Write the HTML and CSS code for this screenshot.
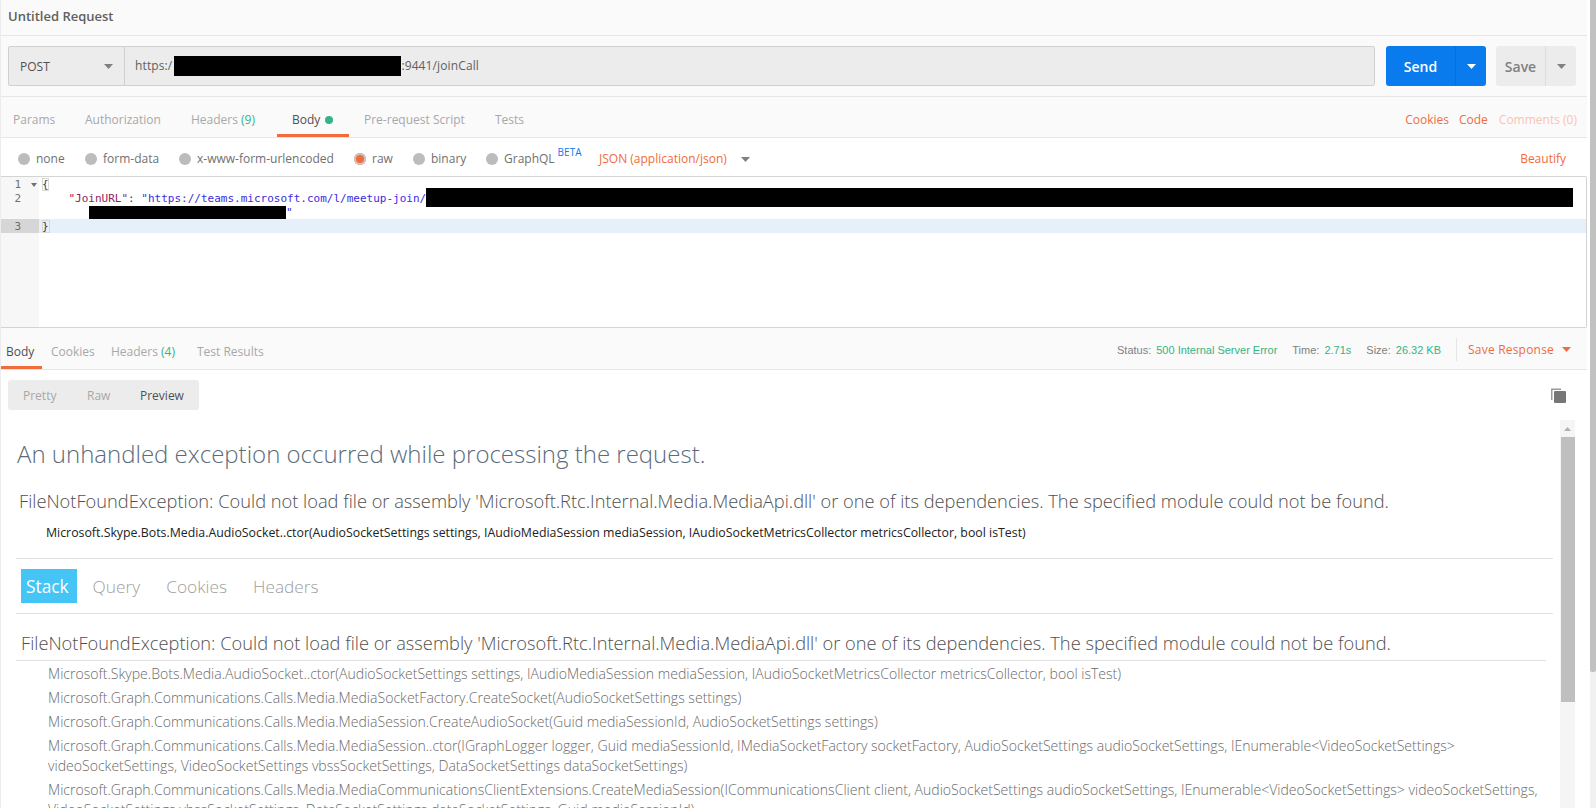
FILE: index.html
```html
<!DOCTYPE html>
<html lang="en">
<head>
<meta charset="utf-8">
<title>Untitled Request</title>
<link rel="stylesheet" href="styles.css">
</head>
<body>
<div class="app">
  <header class="title-row">Untitled Request</header>
  <section class="url-row">
    <div class="url-box">
      <div class="method">POST<svg class="caret" width="9" height="5" viewBox="0 0 9 5"><polygon points="0,0 9,0 4.5,5"/></svg></div>
      <div class="url">https:/<span class="redact redact-url"></span>:9441/joinCall</div>
    </div>
    <div class="btn-send"><span class="btn-main">Send</span><span class="btn-more"><svg width="9" height="5" viewBox="0 0 9 5"><polygon points="0,0 9,0 4.5,5"/></svg></span></div>
    <div class="btn-save"><span class="btn-main">Save</span><span class="btn-more"><svg width="9" height="5" viewBox="0 0 9 5"><polygon points="0,0 9,0 4.5,5"/></svg></span></div>
  </section>
  <nav class="req-tabs">
    <span class="tab t-params">Params</span>
    <span class="tab t-auth">Authorization</span>
    <span class="tab t-headers">Headers <em>(9)</em></span>
    <span class="tab t-body active">Body <i class="dot"></i></span>
    <span class="tab t-pre">Pre-request Script</span>
    <span class="tab t-tests">Tests</span>
    <span class="req-links"><b>Cookies</b><b>Code</b><b class="faint">Comments (0)</b></span>
  </nav>
  <div class="body-types">
    <span class="radio r-none"><i></i>none</span>
    <span class="radio r-form"><i></i>form-data</span>
    <span class="radio r-url"><i></i>x-www-form-urlencoded</span>
    <span class="radio r-raw on"><i></i>raw</span>
    <span class="radio r-bin"><i></i>binary</span>
    <span class="radio r-gql"><i></i>GraphQL<sup>BETA</sup></span>
    <span class="json-type">JSON (application/json)<svg width="9" height="5" viewBox="0 0 9 5"><polygon points="0,0 9,0 4.5,5"/></svg></span>
    <span class="beautify">Beautify</span>
  </div>
  <div class="editor">
    <div class="line l1"><span class="gut">1<svg width="6" height="4" viewBox="0 0 6 4"><polygon points="0,0 6,0 3,4"/></svg></span><code><span class="brace">{</span></code></div>
    <div class="line l2"><span class="gut">2</span><code>    <span class="key">"JoinURL"</span>: <span class="str">"https://teams.microsoft.com/l/meetup-join/</span><span class="redact redact-a"></span></code></div>
    <div class="line l2b"><span class="gut"></span><code><span class="redact redact-b"></span><span class="str">"</span></code></div>
    <div class="line l3"><span class="gut">3</span><code><span class="cursor">}</span></code></div>
    <div class="gutter-rest"></div>
  </div>
  <nav class="res-tabs">
    <span class="rtab r1 active">Body</span>
    <span class="rtab r2">Cookies</span>
    <span class="rtab r3">Headers <em>(4)</em></span>
    <span class="rtab r4">Test Results</span>
    <div class="status">
      <span>Status:</span><em>500 Internal Server Error</em>
      <span class="s-gap">Time:</span><em>2.71s</em>
      <span class="s-gap">Size:</span><em>26.32 KB</em>
    </div>
    <div class="save-res">Save Response<svg width="9" height="5" viewBox="0 0 9 5"><polygon points="0,0 9,0 4.5,5"/></svg></div>
  </nav>
  <section class="response">
    <div class="res-bar">
      <div class="toggle"><span>Pretty</span><span>Raw</span><span class="sel">Preview</span></div>
      <svg class="copy" width="16" height="16" viewBox="0 0 16 16"><path d="M1 1.5h10v1.5H2.5V13H1z" fill="#9a9a9a"/><rect x="4" y="4" width="12" height="12" rx="1" fill="#777"/></svg>
    </div>
    <div class="preview">
      <div class="page">
        <h1>An unhandled exception occurred while processing the request.</h1>
        <h2 class="first">FileNotFoundException: Could not load file or assembly 'Microsoft.Rtc.Internal.Media.MediaApi.dll' or one of its dependencies. The specified module could not be found.</h2>
        <p class="loc">Microsoft.Skype.Bots.Media.AudioSocket..ctor(AudioSocketSettings settings, IAudioMediaSession mediaSession, IAudioSocketMetricsCollector metricsCollector, bool isTest)</p>
        <hr class="hr-a">
        <ul class="stack-tabs"><li class="sel">Stack</li><li>Query</li><li>Cookies</li><li>Headers</li></ul>
        <hr class="hr-b">
        <h2 class="second">FileNotFoundException: Could not load file or assembly 'Microsoft.Rtc.Internal.Media.MediaApi.dll' or one of its dependencies. The specified module could not be found.</h2>
        <hr class="hr-c">
        <ul class="frames">
          <li>Microsoft.Skype.Bots.Media.AudioSocket..ctor(AudioSocketSettings settings, IAudioMediaSession mediaSession, IAudioSocketMetricsCollector metricsCollector, bool isTest)</li>
          <li>Microsoft.Graph.Communications.Calls.Media.MediaSocketFactory.CreateSocket(AudioSocketSettings settings)</li>
          <li>Microsoft.Graph.Communications.Calls.Media.MediaSession.CreateAudioSocket(Guid mediaSessionId, AudioSocketSettings settings)</li>
          <li>Microsoft.Graph.Communications.Calls.Media.MediaSession..ctor(IGraphLogger logger, Guid mediaSessionId, IMediaSocketFactory socketFactory, AudioSocketSettings audioSocketSettings, IEnumerable&lt;VideoSocketSettings&gt; videoSocketSettings, VideoSocketSettings vbssSocketSettings, DataSocketSettings dataSocketSettings)</li>
          <li>Microsoft.Graph.Communications.Calls.Media.MediaCommunicationsClientExtensions.CreateMediaSession(ICommunicationsClient client, AudioSocketSettings audioSocketSettings, IEnumerable&lt;VideoSocketSettings&gt; videoSocketSettings, VideoSocketSettings vbssSocketSettings, DataSocketSettings dataSocketSettings, Guid mediaSessionId)</li>
        </ul>
      </div>
      <div class="vscroll"><div class="vbtn"><svg width="7" height="4" viewBox="0 0 7 4"><polygon points="0,4 7,4 3.5,0"/></svg></div><div class="vthumb"></div></div>
    </div>
  </section>
</div>
<div class="win-scroll"><div class="win-thumb"></div></div>
</body>
</html>
```
FILE: styles.css
```css
* { box-sizing: border-box; }
html, body { margin: 0; height: 100%; }
body { width: 1596px; height: 808px; overflow: hidden; display: flex; background: #fff; font-family: "Open Sans", sans-serif; font-size: 12px; color: #505050; }
.app { width: 1587px; height: 808px; overflow: hidden; border-left: 1px solid #ececec; margin-right: 3px; flex: none; }
.win-scroll { width: 6px; height: 808px; background: #f1f1f1; flex: none; }
.win-thumb { height: 672px; background: #c1c1c1; border-radius: 0 0 2px 2px; }

.title-row { height: 36px; background: #fafafa; border-bottom: 1px solid #e6e6e6; padding: 8px 7px 0; font-size: 13px; line-height: 16px; font-weight: 600; color: #606060; }

.url-row { height: 61px; background: #fafafa; border-bottom: 1px solid #e6e6e6; padding: 10px 9px 10px 7px; display: flex; }
.url-box { flex: none; width: 1367px; height: 40px; background: #ececec; border: 1px solid #d0d0d0; border-radius: 2px; display: flex; align-items: center; }
.method { width: 116px; height: 38px; border-right: 1px solid #d0d0d0; padding: 0 0 0 11px; font-size: 12px; color: #505050; display: flex; align-items: center; }
.caret { margin-left: 54px; fill: #808080; }
.url { padding-left: 10px; font-size: 12px; line-height: 38px; color: #606060; display: flex; align-items: center; white-space: pre; letter-spacing: 0.12px; }
.redact { display: inline-block; background: #000; flex: none; }
.redact-url { width: 227px; height: 20px; margin-left: 2px; }

.btn-send, .btn-save { height: 40px; display: flex; border-radius: 3px; flex: none; }
.btn-send { margin-left: 11px; width: 100px; background: #097bed; color: #fff; fill: #fff; }
.btn-save { margin-left: 10px; width: 80px; background: #ececec; color: #808080; fill: #808080; }
.btn-main { display: flex; align-items: center; justify-content: center; font-size: 14px; font-weight: 600; }
.btn-send .btn-main { width: 69px; }
.btn-save .btn-main { width: 49px; }
.btn-more { flex: 1; display: flex; align-items: center; justify-content: center; border-left: 1px solid #0a6fd2; }
.btn-save .btn-more { border-left-color: #dcdcdc; }

.req-tabs { height: 41px; background: #fafafa; border-bottom: 1px solid #e6e6e6; display: flex; padding-left: 12px; font-size: 12px; line-height: 46px; color: #a8a8a8; }
.tab { display: block; white-space: nowrap; height: 40px; }
.tab em, .rtab em { font-style: normal; color: #33b587; }
.t-params { width: 72px; }
.t-auth { width: 106px; }
.t-headers { width: 87px; }
.t-body { width: 72px; margin-right: 15px; padding-left: 15px; color: #505050; border-bottom: 3px solid #f26b3a; margin-left: -1px; }
.dot { display: inline-block; width: 8px; height: 8px; border-radius: 50%; background: #33b587; margin-left: 2px; }
.t-pre { width: 131px; }
.req-links { margin-left: auto; padding-right: 10px; display: flex; gap: 10px; }
.req-links b { font-weight: 400; color: #f26b3a; }
.req-links b.faint { color: #fbc4af; margin-left: 1px; }

.body-types { height: 38px; background: #fff; display: flex; padding: 4px 0 0 17px; font-size: 12px; line-height: 34px; color: #707070; }
.radio { display: flex; align-items: center; white-space: nowrap; }
.radio i { width: 12px; height: 12px; border-radius: 50%; background: #bcbcbc; margin-right: 6px; flex: none; }
.radio.on i { background: #f26b3a; box-shadow: inset 0 0 0 2px #c8c8c8; }
.r-none { width: 67px; }
.r-form { width: 94px; }
.r-url { width: 175px; }
.r-raw { width: 59px; }
.r-bin { width: 73px; }
.r-gql { width: 113px; }
.radio sup { font-size: 10px; line-height: 10px; color: #097bed; align-self: flex-start; margin: 5px 0 0 3px; }
.json-type { color: #f26b3a; display: flex; align-items: center; white-space: nowrap; }
.json-type svg { fill: #808080; margin-left: 14px; }
.beautify { margin-left: auto; padding-right: 21px; color: #f26b3a; }

.editor { height: 152px; background: #fff; border: 1px solid #d4d4d4; border-left: 0; border-radius: 0 2px 2px 0; font-family: "DejaVu Sans Mono", monospace; font-size: 11px; line-height: 16px; display: flex; flex-direction: column; overflow: hidden; }
.line { display: flex; height: 14px; flex: none; white-space: pre; color: #404040; }
.line code { display: block; font: inherit; padding-left: 3px; white-space: pre; }
.gut { width: 38px; flex: none; background: #f7f7f7; color: #707070; text-align: right; padding-right: 18px; position: relative; }
.gut svg { position: absolute; left: 30px; top: 6px; fill: #707070; }
.l3 { background: #e6f0fb; }
.l3 .gut { background: #d6d6d6; }
.brace { outline: 1px solid #d8d8d8; outline-offset: -1px; }
.cursor { border-right: 1px solid #7a8a9a; outline: 1px solid #d8d8d8; outline-offset: -1px; }
.key { color: #8b1e5f; }
.str { color: #3c2be0; }
.redact-a { width: 1147px; height: 19px; margin: -3px 0 0; vertical-align: top; }
.l2b code { padding-left: 50px; }
.redact-b { width: 197px; height: 16px; margin: 1px 0 -1px; vertical-align: top; }
.gutter-rest { flex: 1; width: 38px; background: #f7f7f7; }

.res-tabs { height: 42px; background: #fafafa; border-bottom: 1px solid #e6e6e6; display: flex; align-items: stretch; font-size: 12px; line-height: 48px; color: #a8a8a8; }
.rtab { white-space: nowrap; display: block; height: 41px; }
.r1 { width: 41px; padding-left: 5px; color: #505050; border-bottom: 3px solid #f26b3a; }
.r2 { width: 60px; margin-left: 9px; }
.r3 { width: 86px; }
.status { margin-left: auto; display: flex; font-family: "Liberation Sans", sans-serif; font-size: 11px; line-height: 45px; color: #808080; }
.status span { margin-right: 5px; }
.status em { font-style: normal; color: #33b587; }
.s-gap { margin-left: 15px; }
.save-res { margin: 10px 0 0 15px; height: 23px; border-left: 1px solid #e6e6e6; padding: 0 16px 0 11px; color: #f26b3a; font-size: 12px; line-height: 23px; letter-spacing: 0.2px; display: flex; align-items: center; }
.save-res svg { fill: #f26b3a; margin-left: 8px; }

.response { background: #fff; height: 439px; }
.res-bar { height: 50px; display: flex; justify-content: space-between; padding: 10px 21px 0 7px; }
.toggle { width: 191px; height: 30px; background: #ececec; border-radius: 3px; display: flex; font-size: 12px; line-height: 32px; color: #a8a8a8; padding-left: 15px; }
.toggle span { flex: none; width: 64px; }
.toggle span:nth-child(2) { width: 53px; }
.toggle .sel { width: auto; color: #505050; }
.copy { margin-top: 7px; }

.preview { display: flex; height: 389px; overflow: hidden; }
.page { width: 1559px; flex: none; font-family: "Open Sans", sans-serif; font-weight: 300; overflow: hidden; }
.page h1 { margin: 19px 0 0 16px; font-size: 24px; line-height: 30px; font-weight: 300; color: #5b6b7b; white-space: nowrap; }
.page h2 { font-size: 18.25px; line-height: 26px; font-weight: 300; color: #505050; white-space: nowrap; }
.first { margin: 19px 0 0 18px; }
.second { margin: 16px 0 0 20px; }
.loc { margin: 10px 0 0 45px; font-size: 12.33px; line-height: 18px; font-weight: 400; color: #222; white-space: nowrap; }
hr { border: 0; border-top: 1px solid #e0e0e0; height: 0; }
.hr-a { margin: 16px 7px 0 15px; }
.hr-b { margin: 10px 7px 0 15px; }
.hr-c { margin: 4px 14px 0 15px; }
.stack-tabs { list-style: none; display: flex; margin: 10px 0 0 20px; padding: 0; height: 34px; font-size: 17.3px; line-height: 36px; color: #a0a0a0; font-weight: 300; }
.stack-tabs li { margin-right: 26px; }
.stack-tabs .sel { background: #44c5f5; color: #fff; padding: 0 8px 0 5px; font-weight: 400; margin-right: 16px; }
.frames { list-style: none; margin: 3px 8px 0 47px; padding: 0; font-size: 14.07px; line-height: 20px; color: #6a6a6a; }
.frames li { margin-bottom: 4px; }

.vscroll { width: 15px; flex: none; background: #f5f5f5; }
.vbtn { height: 17px; background: #f5f5f5; display: flex; align-items: center; justify-content: center; fill: #b0b0b0; }
.vthumb { height: 265px; margin-left: 1px; background: #bfbfbf; }
```
